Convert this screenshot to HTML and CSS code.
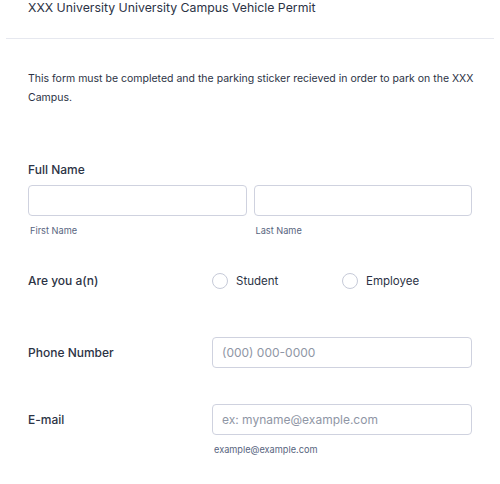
FILE: index.html
```html
<!DOCTYPE html>
<html lang="en">
<head>
    <meta charset="UTF-8">
    <meta name="viewport" content="width=device-width, initial-scale=1.0">
    <title>XXX University Campus Vehicle Permit</title>
    <link rel="stylesheet" href="styles.css">
</head>
<body>
    <div class="form-header">
        <h1>XXX University University Campus Vehicle Permit</h1>
    </div>

    <div class="form-body">
        <p class="intro">This form must be completed and the parking sticker recieved in order to park on the XXX Campus.</p>

        <!-- Full name -->
        <div class="field field-name">
            <label class="field-label">Full Name</label>
            <div class="name-inputs">
                <div class="sub-field">
                    <input type="text" class="text-input">
                    <span class="sub-label">First Name</span>
                </div>
                <div class="sub-field">
                    <input type="text" class="text-input">
                    <span class="sub-label">Last Name</span>
                </div>
            </div>
        </div>

        <!-- Role -->
        <div class="field field-row field-radio">
            <label class="field-label">Are you a(n)</label>
            <div class="radio-group">
                <label class="radio-option"><span class="radio-circle"></span>Student</label>
                <label class="radio-option"><span class="radio-circle"></span>Employee</label>
            </div>
        </div>

        <!-- Phone -->
        <div class="field field-row field-phone">
            <label class="field-label">Phone Number</label>
            <div class="input-wrap">
                <input type="text" class="text-input" placeholder="(000) 000-0000">
            </div>
        </div>

        <!-- Email -->
        <div class="field field-row field-email">
            <label class="field-label">E-mail</label>
            <div class="input-wrap">
                <input type="text" class="text-input" placeholder="ex: myname@example.com">
                <span class="sub-label">example@example.com</span>
            </div>
        </div>
    </div>
</body>
</html>
```

FILE: styles.css
```css
* {
    box-sizing: border-box;
    margin: 0;
    padding: 0;
}

body {
    font-family: Inter, 'Noto Sans', sans-serif;
    color: #2c3345;
    background: #fff;
}

/* Header */
.form-header {
    margin: 0 6px;
    padding: 1px 22px 23px;
    border-bottom: 1px solid #e6e8ef;
}

.form-header h1 {
    font-size: 12.3px;
    font-weight: 400;
    line-height: 14px;
}

/* Body */
.form-body {
    padding: 0 28px;
}

.intro {
    margin-top: 30px;
    margin-right: -8px;
    font-size: 10.5px;
    line-height: 19px;
}

.field {
    margin-top: 55px;
}

.field-label {
    display: block;
    font-size: 12px;
    font-weight: 500;
    line-height: 16px;
}

.name-inputs {
    display: grid;
    grid-template-columns: 1fr 1fr;
    gap: 7px;
    margin-top: 7px;
}

.sub-field {
    display: flex;
    flex-direction: column;
}

.text-input {
    width: 100%;
    height: 31px;
    padding: 0 9px;
    border: 1px solid #cfd2df;
    border-radius: 4px;
    font-family: inherit;
    font-size: 12px;
    color: #2c3345;
    background: #fff;
}

.text-input::placeholder {
    color: #8f96a5;
}

.sub-label {
    display: block;
    margin-top: 9px;
    padding-left: 2px;
    font-size: 9.2px;
    line-height: 12px;
    color: #57647e;
}

/* Label + input on one row */
.field-row {
    display: grid;
    grid-template-columns: 184px 1fr;
    align-items: start;
}

.field-row .field-label {
    line-height: 31px;
}

.field-radio {
    margin-top: 28px;
}

.field-phone {
    margin-top: 41px;
}

.field-email {
    margin-top: 36px;
}

.radio-group {
    display: flex;
    height: 31px;
    align-items: center;
}

.radio-option {
    display: flex;
    align-items: center;
    gap: 8px;
    width: 130px;
    font-size: 11.5px;
}

.radio-circle {
    width: 16px;
    height: 16px;
    border: 1px solid #c6cad8;
    border-radius: 50%;
}
```
